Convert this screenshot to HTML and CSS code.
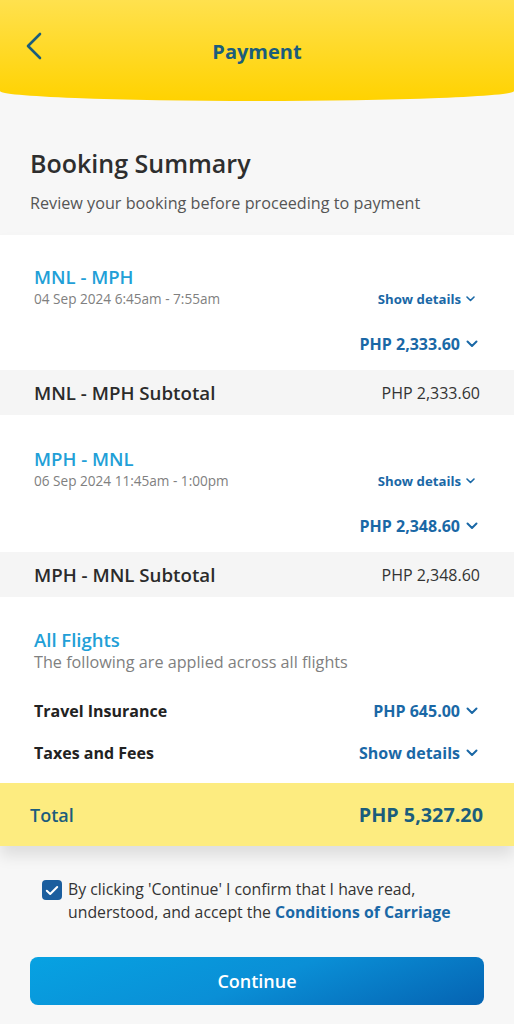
FILE: index.html
```html
<!DOCTYPE html>
<html lang="en">
<head>
  <meta charset="UTF-8">
  <meta name="viewport" content="width=device-width, initial-scale=1.0">
  <title>Payment</title>
  <link rel="stylesheet" href="styles.css">
</head>
<body>

  <header class="top-bar">
    <button class="back-btn" aria-label="Back">
      <svg width="18" height="28" viewBox="0 0 18 28"><path d="M15 2 L3 14 L15 26" fill="none" stroke="#1b5d7c" stroke-width="2.6" stroke-linecap="round" stroke-linejoin="round"/></svg>
    </button>
    <h1 class="top-title">Payment</h1>
  </header>

  <section class="intro">
    <h2>Booking Summary</h2>
    <p>Review your booking before proceeding to payment</p>
  </section>

  <div class="summary-card">
    <!-- outbound -->
    <div class="flight">
      <div class="flight-head">
        <div>
          <div class="route">MNL - MPH</div>
          <div class="flight-time">04 Sep 2024 6:45am - 7:55am</div>
        </div>
        <a class="link small">Show details
          <svg width="9" height="6" viewBox="0 0 9 6"><path d="M1 1 L4.5 4.5 L8 1" fill="none" stroke="currentColor" stroke-width="1.6" stroke-linecap="round" stroke-linejoin="round"/></svg>
        </a>
      </div>
      <div class="flight-price">
        <a class="link">PHP 2,333.60
          <svg width="12" height="8" viewBox="0 0 12 8"><path d="M1.5 1.5 L6 6 L10.5 1.5" fill="none" stroke="currentColor" stroke-width="2" stroke-linecap="round" stroke-linejoin="round"/></svg>
        </a>
      </div>
    </div>
    <div class="subtotal">
      <span class="subtotal-label">MNL - MPH Subtotal</span>
      <span class="subtotal-value">PHP 2,333.60</span>
    </div>

    <!-- return -->
    <div class="flight second">
      <div class="flight-head">
        <div>
          <div class="route">MPH - MNL</div>
          <div class="flight-time">06 Sep 2024 11:45am - 1:00pm</div>
        </div>
        <a class="link small">Show details
          <svg width="9" height="6" viewBox="0 0 9 6"><path d="M1 1 L4.5 4.5 L8 1" fill="none" stroke="currentColor" stroke-width="1.6" stroke-linecap="round" stroke-linejoin="round"/></svg>
        </a>
      </div>
      <div class="flight-price">
        <a class="link">PHP 2,348.60
          <svg width="12" height="8" viewBox="0 0 12 8"><path d="M1.5 1.5 L6 6 L10.5 1.5" fill="none" stroke="currentColor" stroke-width="2" stroke-linecap="round" stroke-linejoin="round"/></svg>
        </a>
      </div>
    </div>
    <div class="subtotal">
      <span class="subtotal-label">MPH - MNL Subtotal</span>
      <span class="subtotal-value">PHP 2,348.60</span>
    </div>

    <!-- extras -->
    <div class="all-flights">
      <div class="route">All Flights</div>
      <div class="all-note">The following are applied across all flights</div>
      <div class="extra-row first">
        <span class="extra-label">Travel Insurance</span>
        <a class="link">PHP 645.00
          <svg width="12" height="8" viewBox="0 0 12 8"><path d="M1.5 1.5 L6 6 L10.5 1.5" fill="none" stroke="currentColor" stroke-width="2" stroke-linecap="round" stroke-linejoin="round"/></svg>
        </a>
      </div>
      <div class="extra-row">
        <span class="extra-label">Taxes and Fees</span>
        <a class="link">Show details
          <svg width="12" height="8" viewBox="0 0 12 8"><path d="M1.5 1.5 L6 6 L10.5 1.5" fill="none" stroke="currentColor" stroke-width="2" stroke-linecap="round" stroke-linejoin="round"/></svg>
        </a>
      </div>
    </div>

    <div class="total">
      <span>Total</span>
      <span class="total-value">PHP 5,327.20</span>
    </div>
  </div>

  <label class="consent">
    <span class="check">
      <svg width="14" height="11" viewBox="0 0 14 11"><path d="M1.8 5.8 L5.2 9 L12.2 2" fill="none" stroke="#fff" stroke-width="2" stroke-linecap="round" stroke-linejoin="round"/></svg>
    </span>
    <span class="consent-text">By clicking 'Continue' I confirm that I have read, understood, and accept the <b>Conditions of Carriage</b></span>
  </label>

  <div class="actions">
    <button class="continue-btn">Continue</button>
  </div>

</body>
</html>
```

FILE: styles.css
```css
body {
  margin: 0;
  font-family: "Open Sans", "Noto Sans", sans-serif;
  background-color: #f7f7f7;
  color: #2b2b2b;
}
.top-bar {
  position: relative;
  height: 101px;
  background: linear-gradient(180deg, #ffe14e 0%, #ffd81f 60%, #ffd200 100%);
  border-radius: 0 0 50% 50% / 0 0 10px 10px;
  display: flex;
  align-items: flex-start;
  justify-content: center;
}
.back-btn {
  position: absolute;
  left: 25px;
  top: 32px;
  padding: 0;
  border: none;
  background: none;
}
.top-title {
  margin: 38px 0 0;
  font-size: 20px;
  line-height: 28px;
  font-weight: 700;
  color: #1b5d7c;
}
.intro {
  padding: 46px 30px 0;
}
.intro h2 {
  margin: 0;
  font-size: 25px;
  line-height: 32px;
  font-weight: 600;
  color: #2e2e2e;
}
.intro p {
  margin: 13px 0 0;
  font-size: 16.2px;
  line-height: 22px;
  color: #555;
}
.summary-card {
  margin-top: 21px;
  background-color: #fff;
  box-shadow: 0 10px 14px rgba(0, 0, 0, 0.10);
}
.flight {
  padding: 30px 36px 15px 34px;
}
.flight.second {
  padding-top: 32px;
}
.flight-head {
  display: flex;
  justify-content: space-between;
  align-items: flex-end;
}
.route {
  font-size: 18.5px;
  line-height: 24px;
  font-weight: 600;
  color: #229fd7;
}
.flight-time {
  font-size: 13.6px;
  line-height: 20px;
  color: #808080;
}
.link {
  display: inline-flex;
  align-items: center;
  gap: 6px;
  font-size: 16px;
  line-height: 22px;
  font-weight: 700;
  color: #1a68a6;
}
.link.small {
  font-size: 13.2px;
  line-height: 20px;
  gap: 5px;
  margin-right: 3px;
}
.flight-price {
  display: flex;
  justify-content: flex-end;
  margin-top: 24px;
}
.subtotal {
  height: 45px;
  padding: 0 34px;
  background-color: #f5f5f5;
  display: flex;
  justify-content: space-between;
  align-items: center;
}
.subtotal-label {
  font-size: 18.7px;
  font-weight: 600;
  color: #2b2b2b;
}
.subtotal-value {
  font-size: 16px;
  color: #333;
}
.all-flights {
  padding: 31px 36px 19px 34px;
}
.all-note {
  font-size: 16.2px;
  line-height: 20px;
  color: #808080;
}
.extra-row {
  display: flex;
  justify-content: space-between;
  align-items: center;
  margin-top: 20px;
}
.extra-row.first {
  margin-top: 28px;
}
.extra-label {
  font-size: 16px;
  line-height: 22px;
  font-weight: 700;
  color: #222;
}
.total {
  height: 63px;
  padding: 0 31px 0 30px;
  background-color: #fdec80;
  display: flex;
  justify-content: space-between;
  align-items: center;
  font-size: 18px;
  font-weight: 600;
  color: #1b5d7c;
}
.total-value {
  font-size: 19.8px;
  font-weight: 700;
}
.consent {
  display: flex;
  align-items: flex-start;
  gap: 6px;
  width: 430px;
  margin: 32px auto 0;
}
.check {
  flex: none;
  width: 20px;
  height: 20px;
  margin-top: 2px;
  border-radius: 4px;
  background-color: #1b5e9e;
  display: flex;
  align-items: center;
  justify-content: center;
}
.consent-text {
  font-size: 15.8px;
  line-height: 23px;
  color: #333;
}
.consent-text b {
  color: #1a68a6;
}
.actions {
  padding: 33px 30px 0;
}
.continue-btn {
  width: 100%;
  height: 48px;
  border: none;
  border-radius: 8px;
  background: linear-gradient(160deg, #07a2e2 0%, #0a8fd6 50%, #0563b2 100%);
  color: #fff;
  font-family: inherit;
  font-size: 18px;
  font-weight: 600;
}
```
